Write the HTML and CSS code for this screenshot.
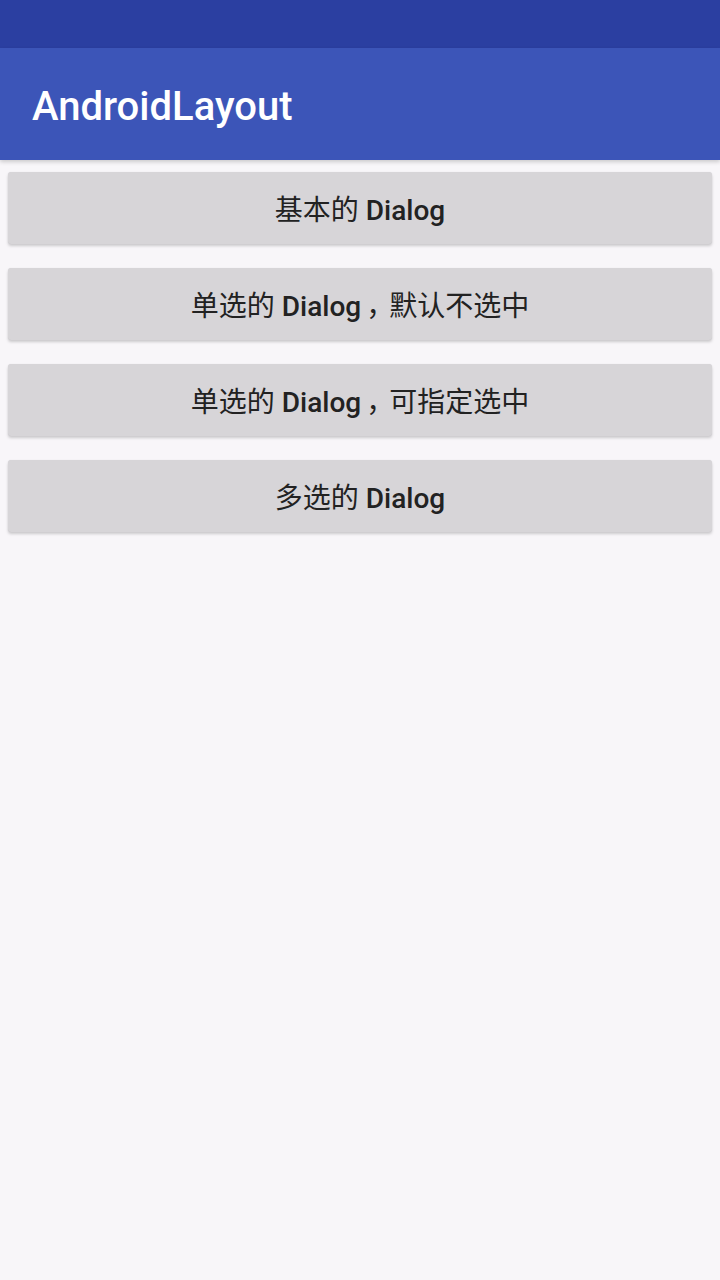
FILE: index.html
```html
<!DOCTYPE html>
<html lang="zh-CN">
<head>
<meta charset="utf-8">
<link rel="stylesheet" href="styles.css">
</head>
<body>
<div class="status"></div>
<header class="appbar"><h1 class="title">AndroidLayout</h1></header>
<main class="list">
  <button class="btn">基本的 <b>Dialog</b></button>
  <button class="btn">单选的 <b>Dialog</b><span class="punct">，</span>默认不选中</button>
  <button class="btn">单选的 <b>Dialog</b><span class="punct">，</span>可指定选中</button>
  <button class="btn">多选的 <b>Dialog</b></button>
</main>
</body>
</html>
```
FILE: styles.css
```css
html, body { margin: 0; padding: 0; }
body {
  width: 720px;
  height: 1280px;
  background: #f8f6f9;
  font-family: Roboto, "Noto Sans CJK SC", sans-serif;
  overflow: hidden;
}
.status { height: 48px; background: #2b3fa1; }
.appbar {
  height: 112px;
  box-sizing: border-box;
  background: #3c55b8;
  display: flex;
  align-items: center;
  padding-left: 32px;
  padding-top: 6px;
  box-shadow: 0 2px 4px rgba(0,0,0,0.18);
  position: relative;
}
.title {
  margin: 0;
  color: #fff;
  font-family: Roboto, sans-serif;
  font-weight: 500;
  font-size: 40px;
  line-height: 1;
}
.list {
  display: flex;
  flex-direction: column;
  gap: 24px;
  padding: 12px 8px;
}
.btn {
  height: 72px;
  border: none;
  border-radius: 3px;
  background: #d7d5d8;
  color: #222;
  font-family: Roboto, "Noto Sans CJK SC", sans-serif;
  font-size: 28px;
  font-weight: 400;
  box-shadow: 0 2px 3px rgba(0,0,0,0.18), 0 0 1px rgba(0,0,0,0.1);
  padding: 0;
}
.btn b { font-weight: 500; }
.punct {
  font-family: "Noto Sans CJK SC", sans-serif;
  font-feature-settings: "halt";
  padding-left: 5px;
  padding-right: 9px;
}
```
